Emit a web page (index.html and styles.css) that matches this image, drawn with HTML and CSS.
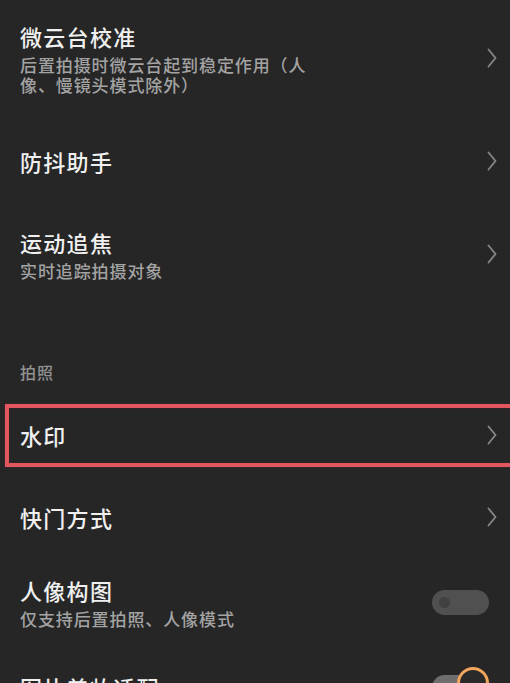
FILE: index.html
```html
<!DOCTYPE html>
<html lang="zh-CN">
<head>
<meta charset="utf-8">
<link rel="stylesheet" href="styles.css">
</head>
<body>
<div class="page">
  <div class="row first">
    <div class="text">
      <div class="title">微云台校准</div>
      <div class="sub">后置拍摄时微云台起到稳定作用（人像、慢镜头模式除外）</div>
    </div>
    <svg class="chev" viewBox="0 0 10 20"><path d="M1.5 1.5 L8.5 10 L1.5 18.5" /></svg>
  </div>
  <div class="row">
    <div class="text">
      <div class="title">防抖助手</div>
    </div>
    <svg class="chev" viewBox="0 0 10 20"><path d="M1.5 1.5 L8.5 10 L1.5 18.5" /></svg>
  </div>
  <div class="row">
    <div class="text">
      <div class="title">运动追焦</div>
      <div class="sub">实时追踪拍摄对象</div>
    </div>
    <svg class="chev" viewBox="0 0 10 20"><path d="M1.5 1.5 L8.5 10 L1.5 18.5" /></svg>
  </div>

  <div class="section">拍照</div>

  <div class="row compact highlighted">
    <div class="text">
      <div class="title">水印</div>
    </div>
    <svg class="chev" viewBox="0 0 10 20"><path d="M1.5 1.5 L8.5 10 L1.5 18.5" /></svg>
    <div class="mark"></div>
  </div>
  <div class="row compact">
    <div class="text">
      <div class="title">快门方式</div>
    </div>
    <svg class="chev" viewBox="0 0 10 20"><path d="M1.5 1.5 L8.5 10 L1.5 18.5" /></svg>
  </div>
  <div class="row compact">
    <div class="text">
      <div class="title">人像构图</div>
      <div class="sub">仅支持后置拍照、人像模式</div>
    </div>
    <div class="toggle off"><span class="knob"></span></div>
  </div>
  <div class="row compact">
    <div class="text">
      <div class="title">图片美妆适配</div>
    </div>
    <div class="toggle on"><span class="knob"></span></div>
  </div>
</div>
</body>
</html>
```
FILE: styles.css
```css
html, body {
  margin: 0;
  padding: 0;
  background: #262626;
}
body {
  font-family: "Noto Sans CJK SC", "Noto Sans", sans-serif;
  color: #efefef;
  width: 510px;
  height: 683px;
  overflow: hidden;
}
.page {
  padding-top: 0;
}
.row {
  position: relative;
  display: flex;
  align-items: center;
  justify-content: space-between;
  box-sizing: border-box;
  min-height: 88px;
  padding: 22px 13px 22px 20px;
}
.row.first {
  padding-top: 21px;
}
.row.compact {
  min-height: 82px;
  padding-top: 17px;
  padding-bottom: 17px;
}
.text {
  max-width: 300px;
}
.title {
  font-size: 22px;
  line-height: 30px;
  letter-spacing: 1.3px;
  font-weight: 500;
  color: #f0f0f0;
}
.sub {
  margin-top: 4px;
  font-size: 17px;
  line-height: 20px;
  letter-spacing: 0.9px;
  font-weight: 500;
  color: #a3a3a3;
}
.chev {
  width: 10px;
  height: 20px;
  flex: none;
}
.chev path {
  fill: none;
  stroke: #858585;
  stroke-width: 1.9;
  stroke-linecap: round;
  stroke-linejoin: round;
}
.section {
  padding: 58px 20px 11px;
  font-size: 16px;
  line-height: 22px;
  letter-spacing: 1px;
  font-weight: 500;
  color: #929292;
}
.mark {
  position: absolute;
  top: 10px;
  left: 5px;
  right: -10px;
  bottom: 9px;
  border: 4px solid #e2575f;
  box-shadow: 0 0 1px #7a2a2e, inset 0 0 1px #7a2a2e;
}
.toggle {
  position: relative;
  width: 57px;
  height: 25px;
  border-radius: 13px;
  margin-right: 8px;
  flex: none;
}
.toggle.off {
  background: #505050;
}
.toggle.off .knob {
  position: absolute;
  left: 7px;
  top: 7px;
  width: 11px;
  height: 11px;
  border-radius: 50%;
  background: #414141;
}
.toggle.on {
  background: #6e6e6e;
}
.toggle.on .knob {
  position: absolute;
  right: 0px;
  top: -8px;
  width: 26px;
  height: 26px;
  border-radius: 50%;
  border: 3px solid #f2a65c;
  background: #2a2a2a;
}
```
